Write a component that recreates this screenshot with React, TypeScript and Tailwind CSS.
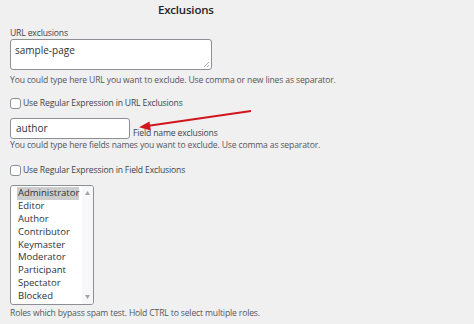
import React from "react";

const font = { fontFamily: '"Open Sans", "Noto Sans", sans-serif' };

function Checkbox() {
  return <span className="inline-block w-[11px] h-[11px] rounded-[3px] border border-[#8c8f94] bg-white shrink-0" />;
}

export default function App() {
  const roles = ["Administrator", "Editor", "Author", "Contributor", "Keymaster", "Moderator", "Participant", "Spectator", "Blocked"];
  return (
    <div className="relative w-[474px] h-[324px] bg-[#f0f0f1] overflow-hidden text-[#50575e]" style={font}>
      <div className="flex flex-col pl-[10px]">
        <div className="h-[20px] pt-[1px] pl-[148px] text-[11.5px] font-semibold tracking-[-0.2px] text-[#1d2327] leading-[18px]">Exclusions</div>
        <div className="mt-[7px] h-[12px] text-[8.6px] tracking-[-0.15px] leading-[12px] text-[#3c434a]">URL exclusions</div>
        <div className="relative w-[202px] h-[31px] rounded-[3px] border border-[#8c8f94] bg-white">
          <div className="pl-[4px] pt-[3px] text-[10px] leading-[15px] text-[#2c3338]">sample-page</div>
          <svg className="absolute right-[1px] bottom-[1px]" width="7" height="7" viewBox="0 0 7 7">
            <path d="M6 1 L1 6 M6 4 L4 6" stroke="#9a9a9a" strokeWidth="0.8" />
          </svg>
        </div>
        <div className="mt-[4px] h-[12px] text-[8.6px] tracking-[-0.15px] leading-[12px]">You could type here URL you want to exclude. Use comma or new lines as separator.</div>
        <div className="mt-[10px] h-[14px] flex items-center gap-[2px] text-[8.6px] tracking-[-0.15px] text-[#3c434a]">
          <Checkbox />
          <span>Use Regular Expression in URL Exclusions</span>
        </div>
        <div className="mt-[8px] flex items-end gap-[3px]">
          <div className="w-[120px] h-[21px] rounded-[3px] border border-[#8c8f94] bg-white pl-[5px] text-[10px] leading-[19px] text-[#2c3338]">author</div>
          <span className="text-[8.6px] tracking-[-0.15px] leading-[12px] text-[#3c434a]">Field name exclusions</span>
        </div>
        <div className="mt-[0px] h-[12px] text-[8.6px] tracking-[-0.15px] leading-[12px]">You could type here fields names you want to exclude. Use comma as separator.</div>
        <div className="mt-[12px] h-[14px] flex items-center gap-[2px] text-[8.6px] tracking-[-0.15px] text-[#3c434a]">
          <Checkbox />
          <span>Use Regular Expression in Field Exclusions</span>
        </div>
        <div className="mt-[8px] w-[84px] h-[120px] rounded-[3px] border border-[#8c8f94] bg-white flex overflow-hidden">
          <div className="flex-1 flex flex-col pl-[6px] pr-[3px] pt-[1px]">
            {roles.map((r, i) => (
              <div
                key={r}
                className={
                  "h-[12.9px] leading-[12.9px] text-[9.5px] text-[#2c3338] pl-[1px] " +
                  (i === 0 ? "bg-[#cdcdcd]" : "")
                }
              >
                {r}
              </div>
            ))}
          </div>
          <div className="w-[12px] bg-[#f7f7f7] flex flex-col items-center justify-between py-[5px]">
            <svg width="5" height="4" viewBox="0 0 5 4"><path d="M2.5 0 L5 4 L0 4 Z" fill="#a3a3a3" /></svg>
            <svg width="5" height="4" viewBox="0 0 5 4"><path d="M0 0 L5 0 L2.5 4 Z" fill="#a3a3a3" /></svg>
          </div>
        </div>
        <div className="mt-[2px] h-[12px] text-[8.6px] tracking-[-0.15px] leading-[12px]">Roles which bypass spam test. Hold CTRL to select multiple roles.</div>
      </div>
      <svg className="absolute left-0 top-0 pointer-events-none" width="474" height="324">
        <line x1="251" y1="111" x2="147" y2="126" stroke="#d0161c" strokeWidth="1.8" />
        <path d="M139 127.3 L149.5 121.5 L150.8 130.5 Z" fill="#d0161c" />
      </svg>
    </div>
  );
}
